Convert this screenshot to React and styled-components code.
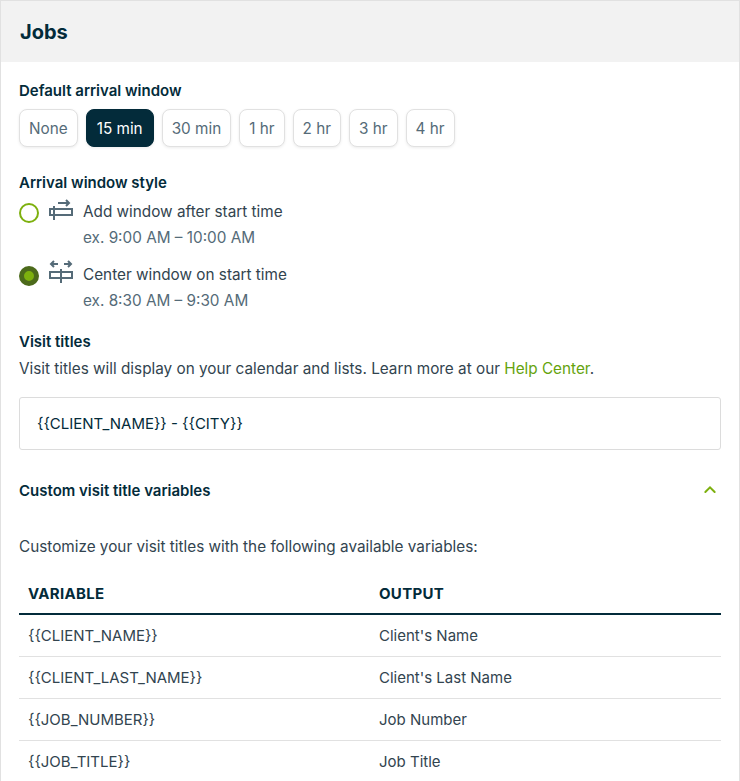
import React, { useState } from "react";
import styled, { createGlobalStyle } from "styled-components";

const Global = createGlobalStyle`
  body { margin: 0; font-family: Inter, "Noto Sans", sans-serif; color: #032b3a; background: #fff; }
`;

const windows = ["None", "15 min", "30 min", "1 hr", "2 hr", "3 hr", "4 hr"];
const variables = [
  ["{{CLIENT_NAME}}", "Client's Name"],
  ["{{CLIENT_LAST_NAME}}", "Client's Last Name"],
  ["{{JOB_NUMBER}}", "Job Number"],
  ["{{JOB_TITLE}}", "Job Title"],
];

const AfterIcon = () => (
  <svg width="24" height="24" viewBox="0 0 24 24" fill="none" stroke="#556b78" strokeWidth="2">
    <rect x="1" y="12" width="22" height="6" />
    <path d="M5 9v14" />
    <path d="M9 6h11M17 3l3 3-3 3" />
  </svg>
);

const CenterIcon = () => (
  <svg width="24" height="24" viewBox="0 0 24 24" fill="none" stroke="#556b78" strokeWidth="2">
    <rect x="1" y="12" width="22" height="6" />
    <path d="M12 9v14" />
    <path d="M2 4h7M5 1L2 4l3 3M15 4h7M19 1l3 3-3 3" />
  </svg>
);

const App = () => {
  const [active, setActive] = useState("15 min");
  const [style, setStyle] = useState("center");

  return (
    <Panel>
      <Global />
      <Header>Jobs</Header>
      <Body>
        <Label>Default arrival window</Label>
        <Chips>
          {windows.map((w) => (
            <Chip key={w} active={active === w} onClick={() => setActive(w)}>{w}</Chip>
          ))}
        </Chips>

        <Label style={{ marginTop: 26 }}>Arrival window style</Label>
        <Option onClick={() => setStyle("after")}>
          <Radio checked={style === "after"} />
          <AfterIcon />
          <div>
            <OptionTitle>Add window after start time</OptionTitle>
            <OptionSub>ex. 9:00 AM – 10:00 AM</OptionSub>
          </div>
        </Option>
        <Option second onClick={() => setStyle("center")}>
          <Radio checked={style === "center"} />
          <CenterIcon />
          <div>
            <OptionTitle>Center window on start time</OptionTitle>
            <OptionSub>ex. 8:30 AM – 9:30 AM</OptionSub>
          </div>
        </Option>

        <Label style={{ marginTop: 20 }}>Visit titles</Label>
        <Text>
          Visit titles will display on your calendar and lists. Learn more at our <Link>Help Center</Link>.
        </Text>
        <Input defaultValue="{{CLIENT_NAME}} - {{CITY}}" />

        <AccordionHead>
          <span>Custom visit title variables</span>
          <svg width="16" height="16" viewBox="0 0 24 24" fill="none" stroke="#7db00e" strokeWidth="3" strokeLinecap="round">
            <path d="M5 15l7-7 7 7" />
          </svg>
        </AccordionHead>
        <Text style={{ marginTop: 0 }}>Customize your visit titles with the following available variables:</Text>
        <Table>
          <thead>
            <tr><Th>VARIABLE</Th><Th>OUTPUT</Th></tr>
          </thead>
          <tbody>
            {variables.map(([v, o]) => (
              <tr key={v}><Td>{v}</Td><Td>{o}</Td></tr>
            ))}
          </tbody>
        </Table>
      </Body>
    </Panel>
  );
};

export default App;

const Panel = styled.div`
  width: 740px;
  height: 781px;
  overflow: hidden;
  box-sizing: border-box;
  border-left: 1px solid #e1e1e1;
  border-top: 1px solid #e1e1e1;
  border-right: 1px solid #e1e1e1;
`;

const Header = styled.div`
  background: #f2f2f2;
  height: 61px;
  padding: 0 19px;
  display: flex;
  align-items: center;
  font-size: 20px;
  font-weight: 700;
`;

const Body = styled.div`
  padding: 19px 18px 0 18px;
`;

const Label = styled.div`
  font-size: 15px;
  font-weight: 600;
  line-height: 20px;
`;

const Chips = styled.div`
  display: flex;
  gap: 8px;
  margin-top: 8px;
`;

const Chip = styled.button`
  height: 38px;
  padding: 0 ${({ active }) => (active ? "10px" : "9px")};
  border-radius: 8px;
  border: 1px solid ${({ active }) => (active ? "#032b3a" : "#e1e1e1")};
  background: ${({ active }) => (active ? "#032b3a" : "#fff")};
  color: ${({ active }) => (active ? "#fff" : "#556b78")};
  box-shadow: 0 1px 3px rgba(0, 0, 0, 0.08);
  font-family: Inter, sans-serif;
  font-size: 15.3px;
  cursor: pointer;
`;

const Option = styled.div`
  display: flex;
  align-items: flex-start;
  gap: 10px;
  margin-top: ${({ second }) => (second ? "15px" : "8px")};
  cursor: pointer;
  svg { flex: none; margin-top: -4px; }
`;

const Radio = styled.span`
  flex: none;
  width: 20px;
  height: 20px;
  margin-top: 2px;
  box-sizing: border-box;
  border-radius: 50%;
  border: ${({ checked }) => (checked ? "5px solid #4c6a1b" : "2px solid #7db00e")};
  background: ${({ checked }) => (checked ? "#7db00e" : "#fff")};
`;

const OptionTitle = styled.div`
  font-size: 15.3px;
  color: #32444f;
  line-height: 22px;
`;

const OptionSub = styled.div`
  font-size: 15.3px;
  color: #556b78;
  margin-top: 4px;
  line-height: 22px;
`;

const Text = styled.div`
  font-size: 15.3px;
  color: #32444f;
  line-height: 22px;
  margin-top: 6px;
`;

const Link = styled.span`
  color: #65a30d;
`;

const Input = styled.input`
  display: block;
  width: 100%;
  box-sizing: border-box;
  height: 53px;
  margin-top: 17px;
  padding: 0 17px;
  border: 1px solid #dcdcdc;
  border-radius: 3px;
  font-family: Inter, sans-serif;
  font-size: 15px;
  color: #032b3a;
  outline: none;
`;

const AccordionHead = styled.div`
  display: flex;
  justify-content: space-between;
  align-items: center;
  height: 80px;
  font-size: 15px;
  font-weight: 600;
  padding-right: 3px;
  margin-bottom: 6px;
`;

const Table = styled.table`
  width: 100%;
  border-collapse: collapse;
  margin-top: 26px;
`;

const Th = styled.th`
  text-align: left;
  font-size: 15px;
  font-weight: 700;
  letter-spacing: 0.3px;
  padding: 0 9px 10px;
  width: 50%;
  border-bottom: 2px solid #032b3a;
`;

const Td = styled.td`
  font-size: 15px;
  color: #32444f;
  height: 41px;
  padding: 0 9px;
  border-bottom: 1px solid #e1e1e1;
`;
